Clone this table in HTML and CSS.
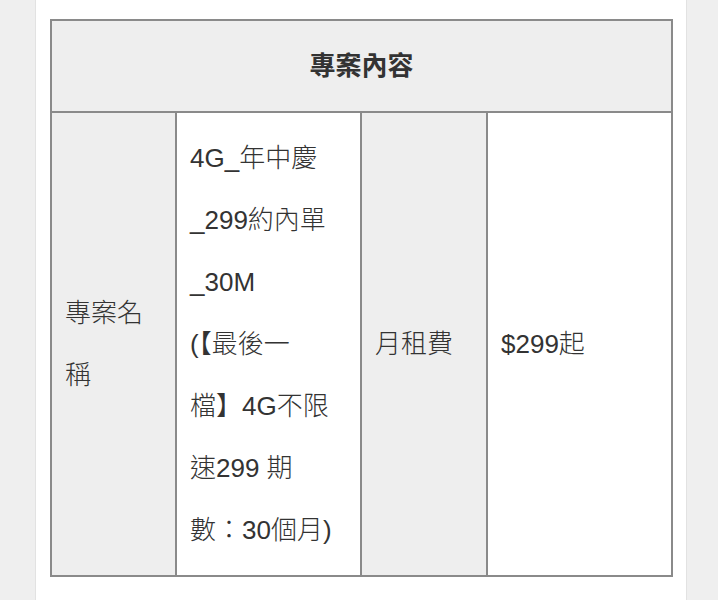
FILE: index.html
```html
<!DOCTYPE html>
<html lang="zh-Hant">
<head>
<meta charset="utf-8">
<title>專案內容</title>
<link rel="stylesheet" href="styles.css">
</head>
<body>
<div class="panel">
  <table class="plan">
    <colgroup>
      <col class="c1">
      <col class="c2">
      <col class="c3">
      <col class="c4">
    </colgroup>
    <thead>
      <tr><th colspan="4" class="head">專案內容</th></tr>
    </thead>
    <tbody>
      <tr>
        <td class="label">專案名<br>稱</td>
        <td class="value">4G_年中慶<br>_299約內單<br>_30M<br>(【最後一<br>檔】4G不限<br>速299 期<br>數：30個月)</td>
        <td class="label">月租費</td>
        <td class="value">$299起</td>
      </tr>
    </tbody>
  </table>
</div>
</body>
</html>
```

FILE: styles.css
```css
html, body {
  margin: 0;
  padding: 0;
  background: #efefef;
}
body {
  font-family: "Liberation Sans", "Noto Sans CJK TC", sans-serif;
  color: #333;
}
.panel {
  box-sizing: border-box;
  margin-left: 35px;
  width: 652px;
  min-height: 600px;
  background: #fff;
  border-left: 1px solid #e2e2e2;
  border-right: 1px solid #e2e2e2;
  padding: 19px 0 0 14px;
}
.plan {
  border-collapse: collapse;
  table-layout: fixed;
  width: 623px;
  font-size: 26px;
  line-height: 62px;
  font-weight: 300;
}
.c1 { width: 125px; }
.c2 { width: 185px; }
.c3 { width: 126px; }
.c4 { width: 185px; }
.plan th,
.plan td {
  border: 2px solid #8a8a8a;
  padding: 14px 13px;
  vertical-align: middle;
  text-align: left;
}
.plan .head {
  background: #eeeeee;
  text-align: center;
  font-weight: bold;
  padding: 14px 0;
}
.plan .label {
  background: #eeeeee;
}
.plan .value {
  background: #fff;
}
```
